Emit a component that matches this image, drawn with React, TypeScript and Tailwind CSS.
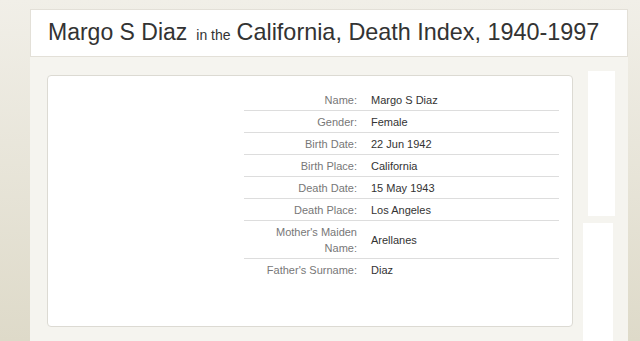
const rows: { label: string; value: string }[] = [
  { label: "Name:", value: "Margo S Diaz" },
  { label: "Gender:", value: "Female" },
  { label: "Birth Date:", value: "22 Jun 1942" },
  { label: "Birth Place:", value: "California" },
  { label: "Death Date:", value: "15 May 1943" },
  { label: "Death Place:", value: "Los Angeles" },
  { label: "Mother's Maiden Name:", value: "Arellanes" },
  { label: "Father's Surname:", value: "Diaz" },
];

export default function App() {
  return (
    <div
      className="h-[341px] w-[640px] overflow-hidden bg-gradient-to-b from-[#f1efe8] to-[#dedac9] pt-[9px] pl-[30px]"
      style={{ fontFamily: '"Liberation Sans", Arial, sans-serif' }}
    >
      <div className="flex h-[332px] w-[598px] flex-col bg-[#f5f4ef]">
        {/* Title bar */}
        <div className="flex h-[48px] items-center border border-[#e3e0d8] bg-white pl-[17px] pb-[1px] text-[#333]">
          <h1 className="flex items-baseline whitespace-nowrap text-[23px] leading-none">
            <span>Margo S Diaz</span>
            <span className="ml-[9px] mr-[6px] text-[14px]">in the</span>
            <span className="text-[23.4px]">California, Death Index, 1940-1997</span>
          </h1>
        </div>

        <div className="flex flex-1 pl-[17px]">
          {/* Record card */}
          <div className="mt-[18px] h-[252px] w-[526px] rounded-[4px] border border-[#dcdad3] bg-white pt-[13px]">
            <table className="ml-auto mr-[13px] w-[315px] border-collapse text-[11px] leading-[16px]">
              <tbody>
                {rows.map((r, i) => (
                  <tr key={r.label} className={i > 0 ? "border-t border-[#dddddd]" : ""}>
                    <td className="w-[120px] pt-[3px] pb-[2px] pr-[7px] text-right align-middle text-[#777]">
                      {r.label}
                    </td>
                    <td className="pt-[3px] pb-[2px] pl-[7px] align-middle text-[#333]">
                      {r.value}
                    </td>
                  </tr>
                ))}
              </tbody>
            </table>
          </div>

          {/* Side boxes */}
          <div className="flex flex-col pt-[14px]">
            <div className="ml-[15px] h-[145px] w-[27px] bg-white" />
            <div className="ml-[10px] mt-[7px] w-[30px] flex-1 bg-white" />
          </div>
        </div>
      </div>
    </div>
  );
}
